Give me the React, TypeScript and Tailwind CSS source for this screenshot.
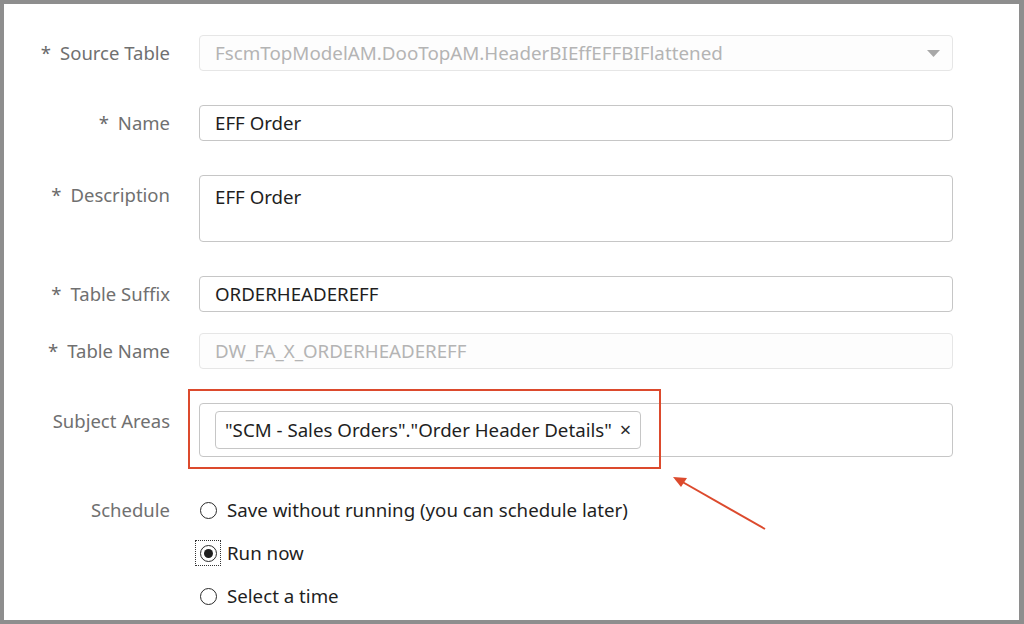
import React from "react";

const font = { fontFamily: '"Noto Sans", "Open Sans", sans-serif' };

function Label({ req, text, pt }: { req?: boolean; text: string; pt?: string }) {
  return (
    <div className={`w-[166px] shrink-0 flex justify-end text-[18.5px] leading-[24px] text-[#707070] ${pt ? pt : "items-center"}`}>
      {req && <span className="mr-[9px] text-[#6a6a6a]">*</span>}
      <span>{text}</span>
    </div>
  );
}

function Radio({ checked, focus, text }: { checked?: boolean; focus?: boolean; text: string }) {
  return (
    <div className="flex items-center h-[24px]">
      <div className="relative w-[18px] h-[18px] flex items-center justify-center">
        {focus && <div className="absolute -inset-[4px] border border-dotted border-[#333]" />}
        <div className="w-[17px] h-[17px] rounded-full border-[1.5px] border-[#2a2a2a] flex items-center justify-center">
          {checked && <div className="w-[9px] h-[9px] rounded-full bg-[#1f1f1f]" />}
        </div>
      </div>
      <span className="ml-[10px] text-[18.7px] leading-[24px] text-[#1f1f1f]">{text}</span>
    </div>
  );
}

export default function App() {
  return (
    <div
      className="relative w-[1024px] h-[624px] bg-white border-t-4 border-l-4 border-b-4 border-r-[5px] border-[#8e8e8e] overflow-hidden"
      style={font}
    >
      <div className="flex flex-col pt-[31px]">
        {/* Source Table */}
        <div className="flex h-[36px]">
          <Label req text="Source Table" />
          <div className="ml-[29px] w-[754px] h-[36px] rounded-[4px] border border-[#e6e6e6] bg-[#fdfdfd] flex items-center pl-[15px] pr-[12px]">
            <span className="flex-1 text-[18.8px] text-[#b4b4b4]">FscmTopModelAM.DooTopAM.HeaderBIEffEFFBIFlattened</span>
            <svg width="13" height="7" viewBox="0 0 13 7">
              <path d="M0 0 L13 0 L6.5 7 Z" fill="#a8a8a8" />
            </svg>
          </div>
        </div>
        {/* Name */}
        <div className="flex h-[36px] mt-[34px]">
          <Label req text="Name" />
          <div className="ml-[29px] w-[754px] h-[36px] rounded-[4px] border border-[#c6c6c6] bg-white flex items-center pl-[15px]">
            <span className="text-[18.7px] text-[#1f1f1f]">EFF Order</span>
          </div>
        </div>
        {/* Description */}
        <div className="flex h-[67px] mt-[34px]">
          <Label req text="Description" pt="pt-[8px]" />
          <div className="ml-[29px] w-[754px] h-[67px] rounded-[4px] border border-[#c6c6c6] bg-white pl-[15px] pt-[9px]">
            <span className="text-[18.7px] leading-[24px] text-[#1f1f1f]">EFF Order</span>
          </div>
        </div>
        {/* Table Suffix */}
        <div className="flex h-[36px] mt-[34px]">
          <Label req text="Table Suffix" />
          <div className="ml-[29px] w-[754px] h-[36px] rounded-[4px] border border-[#c6c6c6] bg-white flex items-center pl-[15px]">
            <span className="text-[18.7px] text-[#1f1f1f]">ORDERHEADEREFF</span>
          </div>
        </div>
        {/* Table Name */}
        <div className="flex h-[36px] mt-[21px]">
          <Label req text="Table Name" />
          <div className="ml-[29px] w-[754px] h-[36px] rounded-[4px] border border-[#e6e6e6] bg-[#fdfdfd] flex items-center pl-[15px]">
            <span className="text-[18.7px] text-[#b4b4b4]">DW_FA_X_ORDERHEADEREFF</span>
          </div>
        </div>
        {/* Subject Areas */}
        <div className="flex h-[54px] mt-[34px]">
          <Label text="Subject Areas" pt="pt-[6px]" />
          <div className="ml-[29px] w-[754px] h-[54px] rounded-[4px] border border-[#c6c6c6] bg-white flex items-center pl-[15px]">
            <div className="h-[38px] rounded-[4px] border border-[#c6c6c6] bg-white flex items-center pl-[9px] pr-[9px]">
              <span className="text-[18.7px] text-[#1f1f1f]">"SCM - Sales Orders"."Order Header Details"</span>
              <span className="ml-[8px] text-[20px] leading-none text-[#2a2a2a]">×</span>
            </div>
          </div>
        </div>
        {/* Schedule */}
        <div className="flex items-start mt-[41px]">
          <Label text="Schedule" pt="pt-0" />
          <div className="ml-[29px] flex flex-col gap-[19px]">
            <Radio text="Save without running (you can schedule later)" />
            <Radio checked focus text="Run now" />
            <Radio text="Select a time" />
          </div>
        </div>
      </div>

      {/* Annotation overlay */}
      <div className="absolute left-[184px] top-[385px] w-[473px] h-[80px] border-2 border-[#dc4a2d]" />
      <svg className="absolute left-0 top-0" width="1024" height="624" style={{ pointerEvents: "none" }}>
        <line x1="761" y1="525" x2="675" y2="476" stroke="#dc4a2d" strokeWidth="2" />
        <path d="M669 473 L683 474 L677 483 Z" fill="#dc4a2d" />
      </svg>
    </div>
  );
}
